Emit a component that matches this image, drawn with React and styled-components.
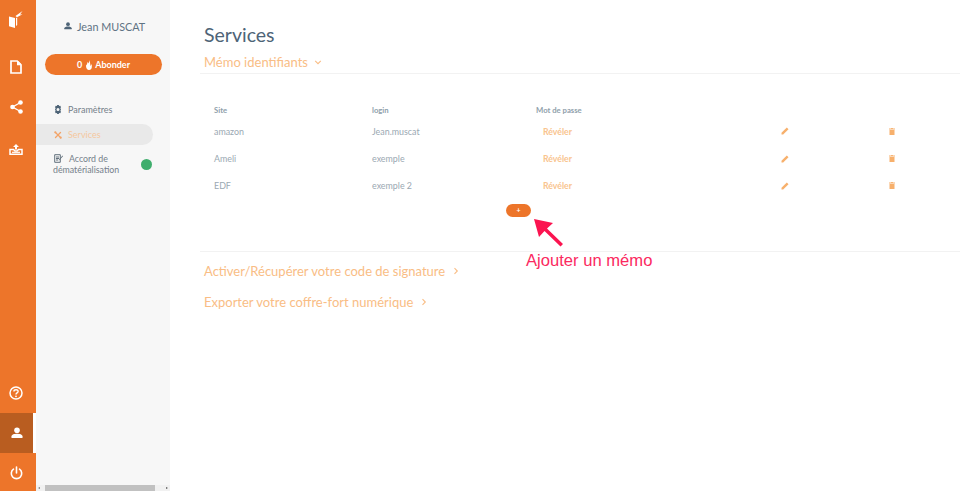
import React from 'react';
import styled, { createGlobalStyle } from 'styled-components';

const Global = createGlobalStyle`
  html, body { margin: 0; padding: 0; height: 100%; background: #fff; overflow: hidden; }
  * { box-sizing: border-box; }
  body { font-family: Lato, "Open Sans", sans-serif; }
`;
const Page = styled.div`display: flex; width: 960px; height: 491px; overflow: hidden; position: relative;`;
const Rail = styled.nav`width: 36px; height: 100%; background: #ed752a; display: flex; flex-direction: column; flex: none;`;
const RailTop = styled.div`display: flex; flex-direction: column; align-items: center; padding-top: 10px; flex: 1;`;
const RailIcon = styled.div`
  height: ${p => p.$h || 19}px; margin-top: ${p => p.$gap || 0}px; padding-top: ${p => p.$pad || 0}px; padding-right: 4px;
  width: 100%; display: flex; align-items: center; justify-content: center; flex: none;
`;
const RailActive = styled.div`
  height: 40px; width: 36px; background: #b95d20; display: flex; align-items: center; justify-content: center; flex: none;
  border-right: 3px solid #fff;
`;
const Sidebar = styled.aside`width: 134px; height: 100%; background: #f7f7f7; flex: none; display: flex; flex-direction: column; position: relative;`;
const User = styled.div`display: flex; align-items: center; gap: 5px; margin-top: 17px; height: 18px; padding-left: 28px; font-size: 10.8px; color: #5f7384;`;
const Topup = styled.button`
  align-self: flex-start; margin: 19px 0 0 9px; width: 117px; height: 21px; border: 0; border-radius: 11px; background: #ed752a; color: #fff;
  font: 700 9px Lato, sans-serif; display: flex; align-items: center; justify-content: center; gap: 3px; padding: 0;
`;
const Menu = styled.div`margin-top: 24px; display: flex; flex-direction: column;`;
const MenuItem = styled.div`
  display: flex; align-items: center; gap: 6px; height: 21px; width: 117px; margin-bottom: 4px; padding-left: 18px; font-size: 9px;
  border-radius: 0 11px 11px 0; color: ${p => p.$active ? '#f5c8a0' : '#75808a'}; background: ${p => p.$active ? '#e9e9e9' : 'transparent'};
`;
const Agreement = styled.div`display: flex; align-items: center; padding-left: 17px; width: 116px; margin-top: 5px; justify-content: space-between;`;
const AgreementText = styled.div`font-size: 8.8px; line-height: 10.5px; color: #75808a; width: 76px; svg { margin: 0 6px 0 1px; vertical-align: -1px; }`;
const Dot = styled.span`width: 11px; height: 11px; border-radius: 50%; background: #3fae6d; flex: none;`;
const Scrollbar = styled.div`position: absolute; left: 0; right: 0; bottom: 0; height: 6px; padding: 0 15px 0 9px; background: #f1f1f1; display: flex; align-items: stretch;`;
const ScrollThumb = styled.div`flex: 1; background: #c1c1c1;`;
const ScrollEnd = styled.span`position: absolute; top: 1.5px; ${p => p.$side}: 2px; width: 0; height: 0; border-top: 1.5px solid transparent; border-bottom: 1.5px solid transparent;
  ${p => p.$side === 'left' ? 'border-right: 2px solid #777;' : 'border-left: 2px solid #555;'}
`;
const Main = styled.main`flex: 1; padding-top: 23px; min-width: 0;`;
const Title = styled.h1`margin: 0 0 0 34px; font: 400 19.5px/24px Lato, sans-serif; color: #4e6477;`;
const SectionHead = styled.div`
  display: flex; align-items: center; gap: 7px; margin-left: 34px; font-size: 13px; line-height: 18px; color: #f9bd85;
`;
const FirstHead = styled(SectionHead)`margin-top: 6px; margin-bottom: 2px; gap: 6px;`;
const Rule = styled.div`height: 1px; margin-left: 30px; background: #f2f2f2;`;
const Table = styled.div`margin: 29px 0 0 44px; display: grid; grid-template-columns: 158px 164px 245px 108px 30px;`;
const Th = styled.div`font: 700 7.7px/15px Lato, sans-serif; color: #8fa0ab; height: 15px;`;
const Td = styled.div`font-size: 8.9px; height: 27.4px; color: #9aa8b2; display: flex; align-items: center; padding-bottom: 1px;`;
const Reveal = styled(Td)`font-weight: 700; color: #f9c48e; padding-left: 7px; font-size: 8.7px;`;
const AddWrap = styled.div`display: flex; margin: 4px 0 0 336px;`;
const AddButton = styled.button`width: 25px; height: 13px; border: 0; border-radius: 7px; background: #ed752a; color: #fff; font: 700 7px/13px Lato, sans-serif; padding: 0;`;
const Lower = styled.div`margin-top: 34px;`;
const Links = styled.div`display: flex; flex-direction: column; gap: 13px; margin-top: 10px;`;
const Callout = styled.div`position: absolute; left: 526px; top: 251px; font: 400 16.6px/20px "Liberation Sans", sans-serif; color: #fb2a5f;`;
const Arrow = styled.svg`position: absolute; left: 530px; top: 212px;`;

const W = '#fff';
const Logo = () => <svg width="14" height="17" viewBox="0 0 14 17"><path fill={W} d="M0 5.500l6 1.500v10l-6-1.800z" /><path fill={W} d="M7 7l1.200-.6V14L7 15z" /><path fill={W} d="M6.500 5L13.500 0 11 3.500l2.500-.3-5.500 3z" /></svg>;
const Doc = () => <svg width="12" height="14" viewBox="0 0 12 14"><path fill="none" stroke={W} strokeWidth="1.700" d="M1 1h6.200L11 4.800V13H1z" /><path fill={W} d="M7 1h1l3 3v1.200H7z" /></svg>;
const Share = () => <svg width="13" height="14" viewBox="0 0 13 14"><g fill={W}><circle cx="10.500" cy="2.500" r="2.300" /><circle cx="2.500" cy="7" r="2.300" /><circle cx="10.500" cy="11.500" r="2.300" /></g><path stroke={W} strokeWidth="1.300" d="M10.500 2.500L2.500 7l8 4.500" fill="none" /></svg>;
const Inbox = () => <svg width="14" height="11" viewBox="0 0 14 11"><path fill={W} d="M7 0l3 3H8v2.500H6V3H4z" /><path fill="none" stroke={W} strokeWidth="1.500" d="M1 5.500h3.500L6 7h2l1.500-1.500H13v4.700H1z" /><path fill={W} d="M3 7.700h8v1.200H3z" /></svg>;
const Help = () => <svg width="14" height="14" viewBox="0 0 14 14"><circle cx="7" cy="7" r="6" fill="none" stroke={W} strokeWidth="1.500" /><path d="M4.900 5.500C5 3.200 9.100 3.200 9.100 5.400c0 1.500-2.100 1.500-2.100 3" fill="none" stroke={W} strokeWidth="1.400" /><circle cx="7" cy="10.300" r=".9" fill={W} /></svg>;
const Person = ({ c = W, s = 12 }) => <svg width={s} height={s} viewBox="0 0 12 12"><circle cx="6" cy="3.200" r="2.800" fill={c} /><path fill={c} d="M.5 11V9.300C.5 7.600 3.500 6.800 6 6.800s5.500.8 5.500 2.500V11z" /></svg>;
const Power = () => <svg width="13" height="14" viewBox="0 0 13 14"><path d="M6.500 1v6" stroke={W} strokeWidth="1.600" strokeLinecap="round" /><path d="M3.500 3.200a5.200 5.200 0 1 0 6 0" fill="none" stroke={W} strokeWidth="1.600" strokeLinecap="round" /></svg>;
const Flame = () => <svg width="7" height="10" viewBox="0 0 7 10"><path fill={W} d="M4.200 0c.3 1.500-.3 2.600-.6 3.600L2.800 1.800 1.800 4.500 1 5.500C.8 8 2.300 10 4 10c1.800 0 3-1.400 2.800-3.200V4L5.500 6 4.900 1.800z" /></svg>;
const Gear = () => <svg width="8" height="9" viewBox="0 0 8 9"><path fill="#4e6477" fillRule="evenodd" d="M3.200 0h1.600l.3 1.100 1.100-.3.900 1.400-.8.800.7 1.500-.7 1.500.8.800-.9 1.400-1.100-.3L4.800 9H3.200l-.3-1.100-1.100.3-.9-1.400.8-.8L1 4.500l.7-1.500-.8-.8.9-1.400 1.100.3zM4 3a1.500 1.500 0 1 0 0 3 1.500 1.500 0 0 0 0-3z" /></svg>;
const Tools = () => <svg width="8" height="8" viewBox="0 0 8 8"><g stroke="#f3a468" strokeWidth="1.300" fill="none" strokeLinecap="round"><path d="M1.500 1.500l5 5" /><path d="M6.500 1.500l-5 5" /></g><circle cx="1.300" cy="1.300" r="1.100" fill="#f3a468" /><circle cx="6.700" cy="6.700" r="1.100" fill="#f3a468" /></svg>;
const Sign = () => <svg width="9" height="9" viewBox="0 0 9 9"><path fill="none" stroke="#62707c" d="M.7.700h5.600v7.600H.7z" /><path stroke="#62707c" d="M2 3h3M2 4.500h3M2 6h2" /><path fill="#62707c" d="M8.500 1.500L5 5.500l-.5 1 1-.4L9 2.200z" /></svg>;
const Chevron = ({ dir }) => <svg width="8" height="8" viewBox="0 0 8 8">{dir === 'down' ? <path d="M1.200 2.800L4 5.600l2.800-2.800" fill="none" stroke="#f9bd85" strokeWidth="1.100" /> : <path d="M2.500 1.200L5.300 4 2.500 6.800" fill="none" stroke="#f9bd85" strokeWidth="1.100" />}</svg>;
const Pencil = () => <svg width="8" height="8" viewBox="0 0 8 8"><path fill="#f7b06c" d="M5.800.5l1.700 1.700L2.200 7.500H.5V5.800z" /></svg>;
const Trash = () => <svg width="6" height="7" viewBox="0 0 6 7"><path fill="#f7b06c" d="M0 .6h2L2.300 0h1.400L4 .6h2v.9H0zM.5 2h5v5h-5z" /></svg>;

const rows = [['amazon', 'Jean.muscat'], ['Ameli', 'exemple'], ['EDF', 'exemple 2']];

export default function App() {
  return (
    <Page>
      <Global />
      <Rail>
        <RailTop>
          <RailIcon><Logo /></RailIcon>
          <RailIcon $gap={28.5}><Doc /></RailIcon>
          <RailIcon $gap={21}><Share /></RailIcon>
          <RailIcon $gap={23}><Inbox /></RailIcon>
        </RailTop>
        <RailIcon $h={40}><Help /></RailIcon>
        <RailActive><Person /></RailActive>
        <RailIcon $h={38} $pad={2}><Power /></RailIcon>
      </Rail>
      <Sidebar>
        <User><Person c="#4e6477" s={8} />Jean MUSCAT</User>
        <Topup>0 <Flame /> Abonder</Topup>
        <Menu>
          <MenuItem><Gear />Paramètres</MenuItem>
          <MenuItem $active><Tools />Services</MenuItem>
          <Agreement>
            <AgreementText><Sign />Accord de dématérialisation</AgreementText>
            <Dot />
          </Agreement>
        </Menu>
        <Scrollbar><ScrollEnd $side="left" /><ScrollThumb /><ScrollEnd $side="right" /></Scrollbar>
      </Sidebar>
      <Main>
        <Title>Services</Title>
        <FirstHead>Mémo identifiants <Chevron dir="down" /></FirstHead>
        <Rule />
        <Table>
          <Th>Site</Th><Th>login</Th><Th>Mot de passe</Th><Th /><Th />
          {rows.map(r => (
            <React.Fragment key={r[0]}>
              <Td>{r[0]}</Td>
              <Td>{r[1]}</Td>
              <Reveal>Révéler</Reveal>
              <Td><Pencil /></Td>
              <Td><Trash /></Td>
            </React.Fragment>
          ))}
        </Table>
        <AddWrap><AddButton>+</AddButton></AddWrap>
        <Lower>
          <Rule />
          <Links>
            <SectionHead>Activer/Récupérer votre code de signature <Chevron /></SectionHead>
            <SectionHead>Exporter votre coffre-fort numérique <Chevron /></SectionHead>
          </Links>
        </Lower>
      </Main>
      <Arrow width="40" height="40" viewBox="0 0 40 40"><path fill="#fb1450" d="M4 7l19 4-6 5.500 16 15.500-2.500 2.500-16-15.500L9 25z" /></Arrow>
      <Callout>Ajouter un mémo</Callout>
    </Page>
  );
}
